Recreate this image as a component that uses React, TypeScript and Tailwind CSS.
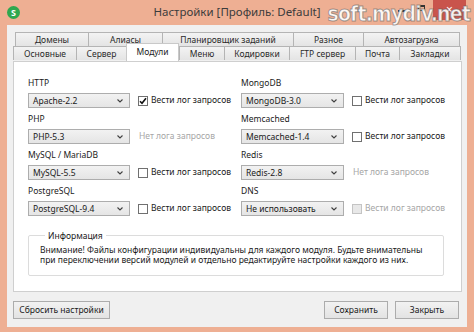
import React from 'react';

const FONT = "font-['Noto_Sans',sans-serif]";

const TOP_TABS: { label: string; w: string }[] = [
  { label: 'Домены', w: 'w-[73px]' },
  { label: 'Алиасы', w: 'w-[74px]' },
  { label: 'Планировщик заданий', w: 'w-[131px]' },
  { label: 'Разное', w: 'w-[70px]' },
  { label: 'Автозагрузка', w: 'w-[97px]' },
];

const BOTTOM_TABS: { label: string; w: string; active?: boolean }[] = [
  { label: 'Основные', w: 'w-[63px]' },
  { label: 'Сервер', w: 'w-[50px]' },
  { label: 'Модули', w: 'w-[53px]', active: true },
  { label: 'Меню', w: 'w-[45px]' },
  { label: 'Кодировки', w: 'w-[65px]' },
  { label: 'FTP сервер', w: 'w-[66px]' },
  { label: 'Почта', w: 'w-[44px]' },
  { label: 'Закладки', w: 'w-[62px]' },
];

type Log = 'on' | 'off' | 'none' | 'disabled';
type Mod = { label: string; value: string; log: Log };

const LEFT: Mod[] = [
  { label: 'HTTP', value: 'Apache-2.2', log: 'on' },
  { label: 'PHP', value: 'PHP-5.3', log: 'none' },
  { label: 'MySQL / MariaDB', value: 'MySQL-5.5', log: 'off' },
  { label: 'PostgreSQL', value: 'PostgreSQL-9.4', log: 'off' },
];

const RIGHT: Mod[] = [
  { label: 'MongoDB', value: 'MongoDB-3.0', log: 'off' },
  { label: 'Memcached', value: 'Memcached-1.4', log: 'off' },
  { label: 'Redis', value: 'Redis-2.8', log: 'none' },
  { label: 'DNS', value: 'Не использовать', log: 'disabled' },
];

function Tab({ label, w, active, last }: { label: string; w: string; active?: boolean; last?: boolean }) {
  if (active) {
    return (
      <div className={`${w} relative z-10 -mt-[3px] h-[18px] border-x border-t border-[#c9c9c9] bg-white text-center leading-[15px] text-[#1e1e1e]`}>
        {label}
      </div>
    );
  }
  return (
    <div
      className={`${w} h-[14px] border-l border-t ${last ? 'border-r' : ''} border-[#b4b4b4] bg-gradient-to-b from-[#f3f3f3] to-[#e4e4e4] text-center leading-[13px] text-[#2a2a2a]`}
    >
      {label}
    </div>
  );
}

function Select({ value, w }: { value: string; w: string }) {
  return (
    <div className={`${w} flex h-[15px] items-center justify-between border border-[#adadad] bg-gradient-to-b from-[#f2f2f2] to-[#e5e5e5] pl-[4px] pr-[6px] text-[#1a1a1a]`}>
      <span className="leading-[13px]">{value}</span>
      <svg width="6" height="4" viewBox="0 0 6 4">
        <path d="M0.5 0.5 L3 3 L5.5 0.5" fill="none" stroke="#404040" strokeWidth="1.1" />
      </svg>
    </div>
  );
}

function LogBox({ log }: { log: Log }) {
  if (log === 'none') {
    return <span className="ml-[9px] text-[#a6a6a6]">Нет лога запросов</span>;
  }
  const dis = log === 'disabled';
  return (
    <div className="ml-[8px] flex items-center gap-[3px]">
      <div
        className={`flex h-[10px] w-[10px] items-center justify-center border ${
          dis ? 'border-[#c4c4c4] bg-[#e8e8e8]' : 'border-[#707070] bg-white'
        }`}
      >
        {log === 'on' && (
          <svg width="8" height="8" viewBox="0 0 8 8">
            <path d="M1 4.2 L3 6.3 L7 1.2" fill="none" stroke="#111" strokeWidth="1.6" />
          </svg>
        )}
      </div>
      <span className={dis ? 'text-[#a6a6a6]' : 'text-[#1a1a1a]'}>Вести лог запросов</span>
    </div>
  );
}

function Column({ items, w, sw }: { items: Mod[]; w: string; sw: string }) {
  return (
    <div className={`${w} flex flex-col gap-[5px]`}>
      {items.map((m) => (
        <div key={m.label}>
          <div className="h-[12px] leading-[12px] text-[#1a1a1a]">{m.label}</div>
          <div className="mt-[4px] flex items-center">
            <Select value={m.value} w={sw} />
            <LogBox log={m.log} />
          </div>
        </div>
      ))}
    </div>
  );
}

function Btn({ children, w }: { children: React.ReactNode; w: string }) {
  return (
    <div className={`${w} flex h-[18px] items-center justify-center border border-[#acacac] bg-gradient-to-b from-[#f2f2f2] to-[#e3e3e3] text-[#1a1a1a]`}>
      {children}
    </div>
  );
}

export default function App() {
  return (
    <div className={`${FONT} relative flex h-[332px] w-[474px] flex-col overflow-hidden bg-[#eeaf93] text-[8.5px]`}>
      {/* заголовок окна */}
      <div className="relative flex h-[25px] items-center">
        <div className="ml-[7px] flex h-[13px] w-[13px] items-center justify-center rounded-full bg-[#2fa84f] text-[9px] font-bold leading-none text-white">
          S
        </div>
        <div className="absolute inset-x-0 top-[3px] text-center text-[11.5px] text-[#3c3c3c]">Настройки [Профиль: Default]</div>
        <div className="ml-auto flex h-full items-start">
          <div className="mt-[10px] h-[1.5px] w-[9px] bg-[#333]" />
          <div className="ml-[11px] mt-[5px] h-[6px] w-[7px] border border-t-2 border-[#333]" />
          <div className="ml-[8px] flex h-[20px] w-[33px] items-center justify-center bg-[#c9544c] text-[12px] text-white">×</div>
          <div className="w-[8px]" />
        </div>
      </div>

      {/* клиентская область */}
      <div className="mx-[7px] flex h-[302px] flex-col bg-[#f0f0f0] px-[6px] pt-[7px]">
        <div className="ml-[2px] flex">
          {TOP_TABS.map((t, i) => (
            <Tab key={t.label} label={t.label} w={t.w} last={i === TOP_TABS.length - 1} />
          ))}
        </div>
        <div className="flex">
          {BOTTOM_TABS.map((t, i) => (
            <Tab key={t.label} label={t.label} w={t.w} active={t.active} last={i === BOTTOM_TABS.length - 1} />
          ))}
        </div>

        <div className="h-[231px] w-[449px] border border-[#cfcfcf] bg-white pl-[14px] pt-[15px]">
          <div className="flex">
            <Column items={LEFT} w="w-[213px]" sw="w-[102px]" />
            <Column items={RIGHT} w="w-[210px]" sw="w-[103px]" />
          </div>

          <fieldset className="mt-[14px] w-[416px] rounded-[2px] border border-[#dcdcdc] px-[11px] pb-[11px] pt-[4px]">
            <legend className="ml-[5px] px-[3px] leading-[11px] text-[#1a1a1a]">Информация</legend>
            <p className="leading-[9.5px] text-[#1a1a1a]">
              Внимание! Файлы конфигурации индивидуальны для каждого модуля. Будьте внимательны
              <br />
              при переключении версий модулей и отдельно редактируйте настройки каждого из них.
            </p>
          </fieldset>
        </div>

        <div className="mt-[9px] flex pr-[2px]">
          <Btn w="w-[97px]">Сбросить настройки</Btn>
          <div className="ml-auto flex gap-[7px]">
            <Btn w="w-[64px]">Сохранить</Btn>
            <Btn w="w-[64px]">Закрыть</Btn>
          </div>
        </div>
      </div>

      {/* водяной знак */}
      <div className="pointer-events-none absolute right-[4px] top-[2px] font-['DejaVu_Sans_Condensed',sans-serif] text-[21px] font-bold leading-[24px] tracking-[-0.8px] text-white/90 [-webkit-text-stroke:1px_rgba(90,90,90,0.55)]">
        soft.mydiv.net
      </div>
    </div>
  );
}
